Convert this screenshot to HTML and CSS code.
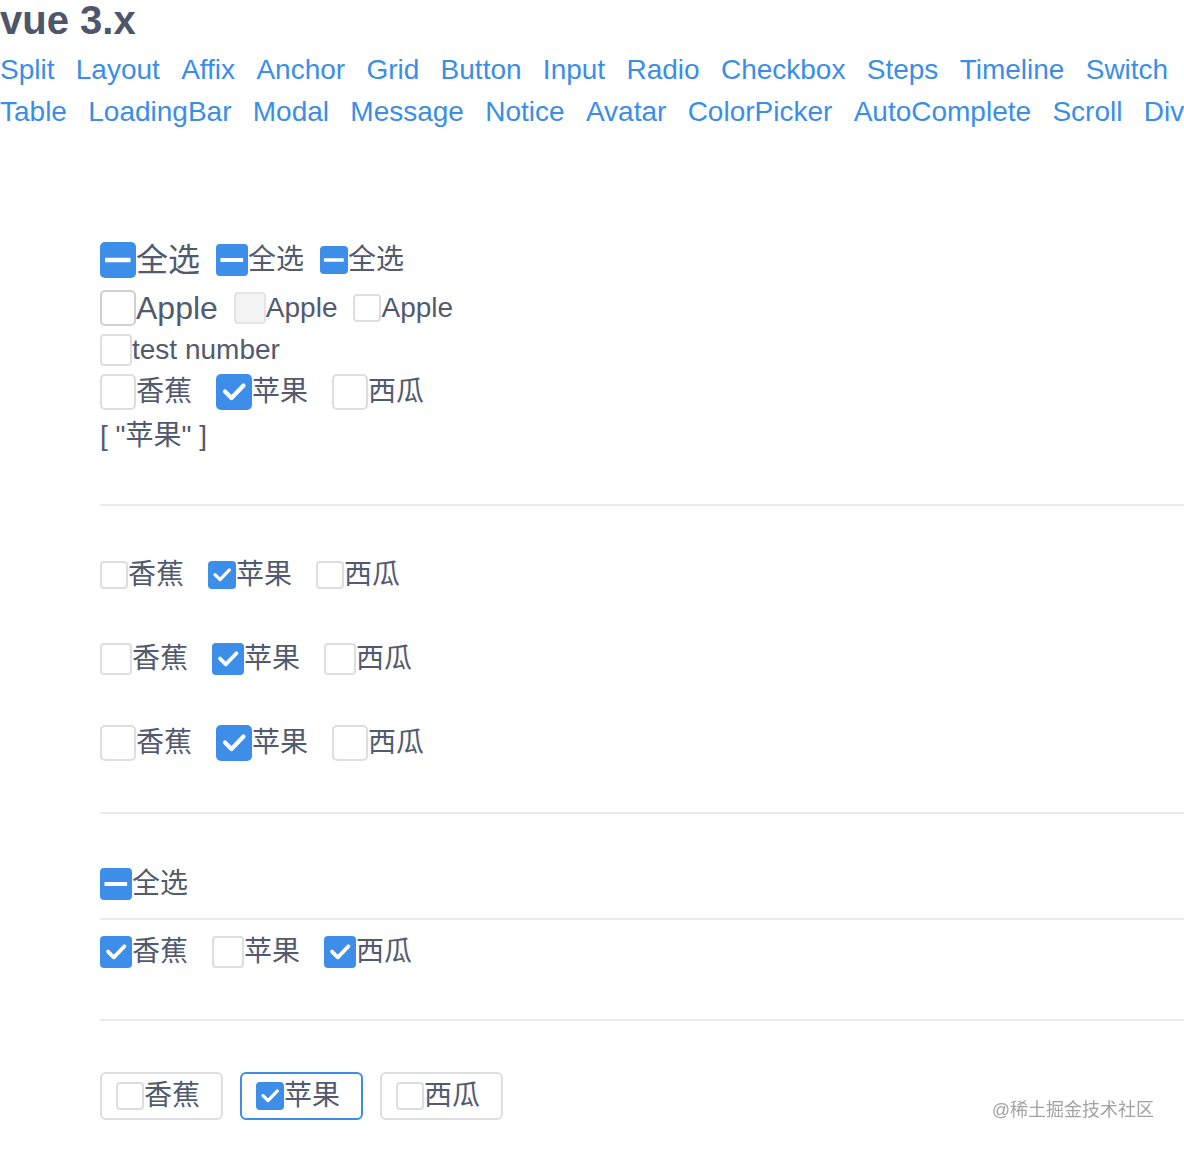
FILE: index.html
```html
<!DOCTYPE html>
<html lang="zh">
<head>
<meta charset="utf-8">
<title>vue 3.x Checkbox</title>
<link rel="stylesheet" href="styles.css">
</head>
<body>
<h1 class="title">vue 3.x</h1>
<nav class="nav">
  <a href="#">Split</a><a href="#">Layout</a><a href="#">Affix</a><a href="#">Anchor</a><a href="#">Grid</a><a href="#">Button</a><a href="#">Input</a><a href="#">Radio</a><a href="#">Checkbox</a><a href="#">Steps</a><a href="#">Timeline</a><a href="#">Switch</a><a href="#">Table</a><a href="#">LoadingBar</a><a href="#">Modal</a><a href="#">Message</a><a href="#">Notice</a><a href="#">Avatar</a><a href="#">ColorPicker</a><a href="#">AutoComplete</a><a href="#">Scroll</a><a href="#">Divider</a>
</nav>

<main class="main">
  <section class="sec sec-1">
    <div class="row h48">
      <label class="cb cb-lg"><span class="cb-box on"><svg viewBox="0 0 36 36"><rect x="5" y="15.7" width="25.5" height="4.6" rx="0.6"/></svg></span><span class="cb-text big">全选</span></label>
      <label class="cb"><span class="cb-box on"><svg viewBox="0 0 36 36"><rect x="5" y="15.7" width="25.5" height="4.6" rx="0.6"/></svg></span><span class="cb-text">全选</span></label>
      <label class="cb cb-sm"><span class="cb-box on"><svg viewBox="0 0 36 36"><rect x="5" y="15.7" width="25.5" height="4.6" rx="0.6"/></svg></span><span class="cb-text">全选</span></label>
    </div>
    <div class="row h48">
      <label class="cb cb-lg"><span class="cb-box focus"></span><span class="cb-text big">Apple</span></label>
      <label class="cb"><span class="cb-box disabled"></span><span class="cb-text">Apple</span></label>
      <label class="cb cb-sm"><span class="cb-box"></span><span class="cb-text">Apple</span></label>
    </div>
    <div class="row h36">
      <label class="cb"><span class="cb-box"></span><span class="cb-text">test number</span></label>
    </div>
    <div class="row h48 group">
      <label class="cb cb-lg"><span class="cb-box"></span><span class="cb-text">香蕉</span></label>
      <label class="cb cb-lg"><span class="cb-box on"><svg viewBox="0 0 36 36"><polyline points="9,17.5 15.5,24 27.5,11.5"/></svg></span><span class="cb-text">苹果</span></label>
      <label class="cb cb-lg"><span class="cb-box"></span><span class="cb-text">西瓜</span></label>
    </div>
    <div class="row h38">
      <span class="value">[ "苹果" ]</span>
    </div>
  </section>

  <hr class="divider">

  <section class="sec sec-2">
    <div class="row h84 group">
      <label class="cb cb-sm"><span class="cb-box"></span><span class="cb-text">香蕉</span></label>
      <label class="cb cb-sm"><span class="cb-box on"><svg viewBox="0 0 36 36"><polyline points="9,17.5 15.5,24 27.5,11.5"/></svg></span><span class="cb-text">苹果</span></label>
      <label class="cb cb-sm"><span class="cb-box"></span><span class="cb-text">西瓜</span></label>
    </div>
    <div class="row h84 group">
      <label class="cb"><span class="cb-box"></span><span class="cb-text">香蕉</span></label>
      <label class="cb"><span class="cb-box on"><svg viewBox="0 0 36 36"><polyline points="9,17.5 15.5,24 27.5,11.5"/></svg></span><span class="cb-text">苹果</span></label>
      <label class="cb"><span class="cb-box"></span><span class="cb-text">西瓜</span></label>
    </div>
    <div class="row h84 group">
      <label class="cb cb-lg"><span class="cb-box"></span><span class="cb-text">香蕉</span></label>
      <label class="cb cb-lg"><span class="cb-box on"><svg viewBox="0 0 36 36"><polyline points="9,17.5 15.5,24 27.5,11.5"/></svg></span><span class="cb-text">苹果</span></label>
      <label class="cb cb-lg"><span class="cb-box"></span><span class="cb-text">西瓜</span></label>
    </div>
  </section>

  <hr class="divider">

  <section class="sec sec-3">
    <div class="row h36">
      <label class="cb"><span class="cb-box on"><svg viewBox="0 0 36 36"><rect x="5" y="15.7" width="25.5" height="4.6" rx="0.6"/></svg></span><span class="cb-text">全选</span></label>
    </div>
    <hr class="divider inner">
    <div class="row h36 group">
      <label class="cb"><span class="cb-box on"><svg viewBox="0 0 36 36"><polyline points="9,17.5 15.5,24 27.5,11.5"/></svg></span><span class="cb-text">香蕉</span></label>
      <label class="cb"><span class="cb-box"></span><span class="cb-text">苹果</span></label>
      <label class="cb"><span class="cb-box on"><svg viewBox="0 0 36 36"><polyline points="9,17.5 15.5,24 27.5,11.5"/></svg></span><span class="cb-text">西瓜</span></label>
    </div>
  </section>

  <hr class="divider">

  <section class="sec sec-4">
    <div class="row">
      <label class="cb-btn"><span class="cb cb-sm"><span class="cb-box"></span><span class="cb-text">香蕉</span></span></label>
      <label class="cb-btn checked"><span class="cb cb-sm"><span class="cb-box on"><svg viewBox="0 0 36 36"><polyline points="9,17.5 15.5,24 27.5,11.5"/></svg></span><span class="cb-text">苹果</span></span></label>
      <label class="cb-btn"><span class="cb cb-sm"><span class="cb-box"></span><span class="cb-text">西瓜</span></span></label>
    </div>
  </section>
</main>

<div class="watermark">@稀土掘金技术社区</div>
</body>
</html>
```

FILE: styles.css
```css
html {
  overflow-x: hidden;
}

body {
  margin: 0;
  font-family: "Liberation Sans", "Noto Sans CJK SC", sans-serif;
  color: #515a6e;
  background: #fff;
}

.title {
  margin: 0 0 9px 0;
  font-size: 40px;
  line-height: 40px;
  font-weight: bold;
  color: #4d566a;
}

.nav {
  width: 1240px;
  display: flex;
  flex-wrap: wrap;
  column-gap: 21.3px;
  font-size: 28px;
  line-height: 42px;
}

.nav a {
  color: #3a8ee8;
  text-decoration: none;
}

.main {
  margin: 103px 0 0 100px;
  width: 1140px;
}

.row {
  display: flex;
  align-items: center;
}

.h36 { height: 36px; }
.h38 { height: 38px; }
.h48 { height: 48px; }
.h84 { height: 84px; }

.sec-1 {
  margin-bottom: 50px;
}

.sec-2 {
  padding: 27px 0;
}

.sec-3 {
  padding: 52px 0 49px;
}

.sec-4 {
  padding-top: 51px;
}

.divider {
  display: block;
  height: 2px;
  margin: 0;
  border: 0;
  background: #e8eaec;
}

.divider.inner {
  margin: 16px 0 14px;
}

/* checkbox */
.cb {
  display: inline-flex;
  align-items: center;
  margin-right: 16px;
  font-size: 28px;
  line-height: 1;
  cursor: pointer;
}

.group .cb {
  margin-right: 24px;
}

.cb-box {
  box-sizing: border-box;
  width: 32px;
  height: 32px;
  flex: none;
  border-radius: 4px;
  background: #fff;
  box-shadow: inset 0 0 0 2px #dcdee2;
  display: flex;
}

.cb-lg .cb-box {
  width: 36px;
  height: 36px;
  border-radius: 5px;
}

.cb-sm .cb-box {
  width: 28px;
  height: 28px;
}

.cb-box.on {
  background: #3c8ee8;
  box-shadow: none;
}

.cb-box.focus {
  box-shadow: inset 0 0 0 2px #d0d0d0;
}

.cb-box.disabled {
  background: #f3f3f3;
  box-shadow: inset 0 0 0 2px #e4e4e4;
}

.cb-box svg {
  width: 100%;
  height: 100%;
  display: block;
}

.cb-box svg rect {
  fill: #fff;
}

.cb-box svg polyline {
  fill: none;
  stroke: #fff;
  stroke-width: 4.2;
  stroke-linecap: round;
  stroke-linejoin: round;
}

.cb-text {
  white-space: nowrap;
}

.cb-text.big {
  font-size: 32px;
}

.value {
  font-size: 28px;
  white-space: pre;
  position: relative;
  top: -2px;
}

/* bordered checkbox */
.cb-btn {
  box-sizing: border-box;
  height: 48px;
  display: inline-flex;
  align-items: center;
  padding: 0 21px 0 14px;
  margin-right: 17px;
  border: 2px solid #dcdee2;
  border-radius: 6px;
  cursor: pointer;
}

.cb-btn .cb {
  margin-right: 0;
}

.cb-btn.checked {
  border-color: #3c8ee8;
}

.watermark {
  position: fixed;
  right: 30px;
  bottom: 31px;
  font-size: 18px;
  line-height: 18px;
  color: #a3a3a3;
  text-shadow: 0 0 1px rgba(255, 255, 255, 0.6);
}
```
